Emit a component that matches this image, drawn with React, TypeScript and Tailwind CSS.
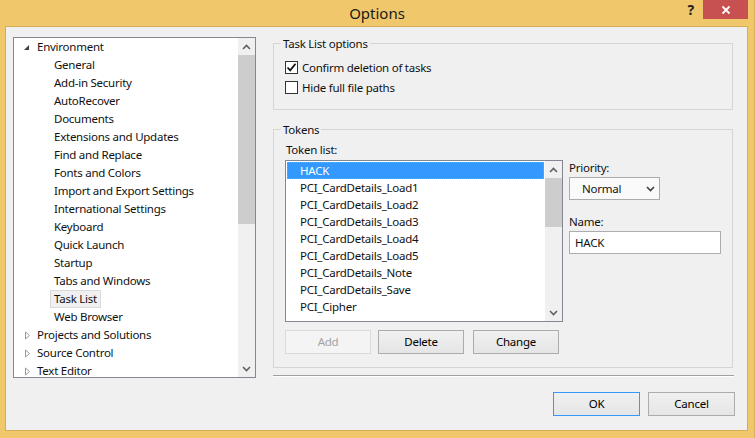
import React from 'react';

const treeItems: { label: string; level: 0 | 1; expanded?: boolean; selected?: boolean }[] = [
  { label: 'Environment', level: 0, expanded: true },
  { label: 'General', level: 1 },
  { label: 'Add-in Security', level: 1 },
  { label: 'AutoRecover', level: 1 },
  { label: 'Documents', level: 1 },
  { label: 'Extensions and Updates', level: 1 },
  { label: 'Find and Replace', level: 1 },
  { label: 'Fonts and Colors', level: 1 },
  { label: 'Import and Export Settings', level: 1 },
  { label: 'International Settings', level: 1 },
  { label: 'Keyboard', level: 1 },
  { label: 'Quick Launch', level: 1 },
  { label: 'Startup', level: 1 },
  { label: 'Tabs and Windows', level: 1 },
  { label: 'Task List', level: 1, selected: true },
  { label: 'Web Browser', level: 1 },
  { label: 'Projects and Solutions', level: 0 },
  { label: 'Source Control', level: 0 },
  { label: 'Text Editor', level: 0 },
];

const tokens = [
  'HACK',
  'PCI_CardDetails_Load1',
  'PCI_CardDetails_Load2',
  'PCI_CardDetails_Load3',
  'PCI_CardDetails_Load4',
  'PCI_CardDetails_Load5',
  'PCI_CardDetails_Note',
  'PCI_CardDetails_Save',
  'PCI_Cipher',
];

function Chevron({ up }: { up?: boolean }) {
  return (
    <svg width="9" height="6" viewBox="0 0 9 6">
      <path
        d={up ? 'M1 5 L4.5 1.5 L8 5' : 'M1 1 L4.5 4.5 L8 1'}
        stroke="#606060"
        strokeWidth="1.6"
        fill="none"
      />
    </svg>
  );
}

function ScrollBar({ thumbTop, thumbHeight }: { thumbTop: number; thumbHeight: number }) {
  return (
    <div className="w-[17px] h-full bg-[#f0f0f0] flex flex-col shrink-0">
      <div className="h-[17px] flex items-center justify-center">
        <Chevron up />
      </div>
      <div className="flex-1 flex flex-col">
        <div style={{ height: thumbTop }} />
        <div className="bg-[#cdcdcd]" style={{ height: thumbHeight }} />
      </div>
      <div className="h-[17px] flex items-center justify-center">
        <Chevron />
      </div>
    </div>
  );
}

function Expander({ expanded }: { expanded?: boolean }) {
  return (
    <svg width="8" height="9" viewBox="0 0 8 9" className="shrink-0">
      {expanded ? (
        <path d="M6 2 L6 7 L1 7 Z" fill="#404040" />
      ) : (
        <path d="M2.5 1 L6.5 4.5 L2.5 8 Z" fill="none" stroke="#9a9a9a" strokeWidth="1" />
      )}
    </svg>
  );
}

function Button({ children, disabled, focused, w = 'w-[86px]' }: { children: React.ReactNode; disabled?: boolean; focused?: boolean; w?: string }) {
  return (
    <div
      className={`${w} h-[24px] flex items-center justify-center border ${
        disabled
          ? 'border-[#d9d9d9] bg-[#f4f4f4] text-[#a3a3a3]'
          : focused
          ? 'border-[#3399ff] bg-gradient-to-b from-[#f0f0f0] to-[#e5e5e5] text-black'
          : 'border-[#acacac] bg-gradient-to-b from-[#f0f0f0] to-[#e5e5e5] text-black'
      }`}
    >
      {children}
    </div>
  );
}

function CheckBox({ checked, label }: { checked?: boolean; label: string }) {
  return (
    <div className="flex items-center h-[20px]">
      <div className="w-[13px] h-[13px] border border-[#333] bg-white flex items-center justify-center">
        {checked && (
          <svg width="11" height="11" viewBox="0 0 11 11">
            <path d="M1.5 5.5 L4.2 8.3 L9.5 1.8" stroke="#111" strokeWidth="1.8" fill="none" />
          </svg>
        )}
      </div>
      <span className="ml-[4px] mt-[1px]">{label}</span>
    </div>
  );
}

function GroupBox({ title, className, children }: { title: string; className: string; children: React.ReactNode }) {
  return (
    <div className={`relative border border-[#d5d5d5] ${className}`}>
      <span className="absolute -top-[8px] left-[7px] px-[2px] bg-[#f0f0f0] leading-[16px]">{title}</span>
      {children}
    </div>
  );
}

export default function App() {
  return (
    <div className="w-[755px] h-[438px] bg-[#f0c86b] flex flex-col font-['Noto_Sans','Open_Sans',sans-serif] text-[11.5px] tracking-[-0.25px] text-[#111] border-r border-[#d8b15c] overflow-hidden">
      {/* title bar */}
      <div className="h-[26px] flex items-start shrink-0">
        <div className="flex-1" />
        <div className="text-[15px] leading-[26px] tracking-normal text-[#1a1a1a]">Options</div>
        <div className="flex-1 flex justify-end">
          <div className="font-bold text-[14px] leading-[18px] mr-[9px] mt-[1px] text-[#222]">?</div>
          <div className="w-[45px] h-[19px] bg-[#c75050] flex items-center justify-center mr-[6px]">
            <svg width="10" height="10" viewBox="0 0 10 10">
              <path d="M1.5 1.5 L8.5 8.5 M8.5 1.5 L1.5 8.5" stroke="#fff" strokeWidth="1.8" />
            </svg>
          </div>
        </div>
      </div>

      {/* client area */}
      <div className="ml-[5px] mr-[6px] h-[405px] border border-[#d6ae58] bg-[#f0f0f0] flex">
        {/* category tree */}
        <div className="ml-[7px] mt-[10px] w-[243px] h-[341px] border border-[#828790] bg-white flex shrink-0">
          <div className="flex-1 overflow-hidden">
            {treeItems.map((item) => (
              <div key={item.label} className="h-[18px] flex items-center">
                {item.level === 0 ? (
                  <>
                    <div className="w-[9px]" />
                    <Expander expanded={item.expanded} />
                    <span className="ml-[6px] leading-[18px] whitespace-nowrap">{item.label}</span>
                  </>
                ) : (
                  <span
                    className={`ml-[36px] px-[3px] h-[18px] leading-[16px] whitespace-nowrap border ${
                      item.selected ? 'border-[#dadada] bg-[#f0f0f0]' : 'border-transparent'
                    }`}
                  >
                    {item.label}
                  </span>
                )}
              </div>
            ))}
          </div>
          <ScrollBar thumbTop={0} thumbHeight={169} />
        </div>

        {/* options pane */}
        <div className="ml-[17px] w-[460px] flex flex-col">
          <GroupBox title="Task List options" className="mt-[16px] h-[67px] pl-[11px] pt-[13px]">
            <CheckBox checked label="Confirm deletion of tasks" />
            <CheckBox label="Hide full file paths" />
          </GroupBox>

          <GroupBox title="Tokens" className="mt-[19px] h-[239px] pl-[11px]">
            <div className="flex">
              <div className="flex flex-col">
                <div className="mt-[12px] ml-[1px] leading-[16px]">Token list:</div>
                <div className="mt-[2px] w-[278px] h-[162px] border border-[#828790] bg-white flex">
                  <div className="flex-1 p-[1px] overflow-hidden">
                    {tokens.map((t, i) => (
                      <div
                        key={t}
                        className={`h-[17px] pl-[12px] leading-[15px] whitespace-nowrap border ${
                          i === 0 ? 'bg-[#3399ff] text-white border-dotted border-[#e3923a]' : 'border-transparent'
                        }`}
                      >
                        {t}
                      </div>
                    ))}
                  </div>
                  <ScrollBar thumbTop={0} thumbHeight={49} />
                </div>
                <div className="mt-[8px] flex">
                  <Button disabled>Add</Button>
                  <div className="ml-[7px]">
                    <Button>Delete</Button>
                  </div>
                  <div className="ml-[9px]">
                    <Button>Change</Button>
                  </div>
                </div>
              </div>

              <div className="ml-[6px] flex flex-col">
                <div className="mt-[30px] leading-[16px]">Priority:</div>
                <div className="mt-[1px] w-[91px] h-[23px] border border-[#acacac] bg-[#fafafa] flex items-center">
                  <span className="ml-[12px] flex-1">Normal</span>
                  <svg width="9" height="6" viewBox="0 0 9 6" className="mr-[4px]">
                    <path d="M1 1 L4.5 4.5 L8 1" stroke="#404040" strokeWidth="1.6" fill="none" />
                  </svg>
                </div>
                <div className="mt-[14px] leading-[16px]">Name:</div>
                <div className="mt-[1px] w-[152px] h-[23px] border border-[#abadb3] bg-white flex items-center">
                  <span className="ml-[5px]">HACK</span>
                </div>
              </div>
            </div>
          </GroupBox>

          {/* separator */}
          <div className="mt-[7px] w-[461px] h-[2px] border-t border-[#a0a0a0] border-b border-b-white" />

          <div className="mt-[15px] w-[462px] flex justify-end">
            <Button focused w="w-[87px]">OK</Button>
            <div className="ml-[8px]">
              <Button w="w-[87px]">Cancel</Button>
            </div>
          </div>
        </div>
      </div>
    </div>
  );
}
